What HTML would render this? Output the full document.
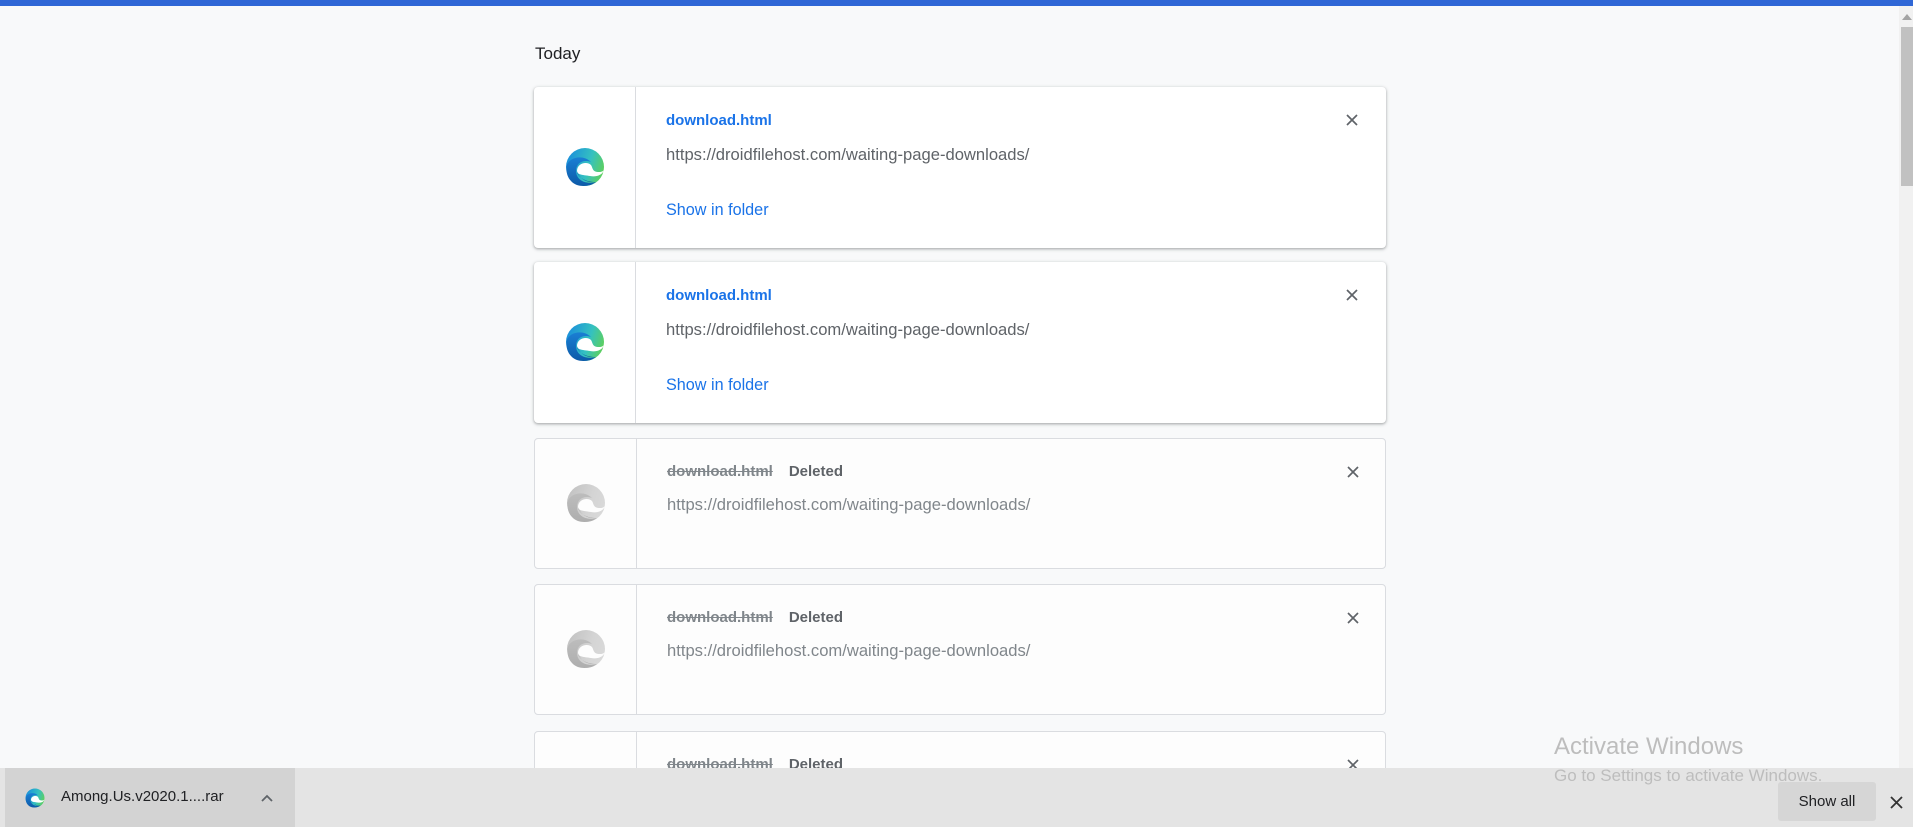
<!DOCTYPE html>
<html><head><meta charset="utf-8"><style>
*{margin:0;padding:0;box-sizing:border-box}
html{width:1913px;height:827px;overflow:hidden}
body{width:1913px;height:827px;overflow:hidden;background:#f8f9fa;font-family:"Liberation Sans",Arial,sans-serif;position:relative}
.topbar{position:absolute;left:0;top:0;width:1913px;height:6px;background:#2f67d6}
.sb{position:absolute;left:1899px;top:6px;width:14px;height:762px;background:#f1f1f1}
.thumb{position:absolute;left:1901px;top:27px;width:12px;height:159px;background:#c1c1c1}
.today{position:absolute;left:535px;top:44px;font-size:17px;color:#202124}
.card{position:absolute;left:534px;width:852px;background:#fff;border-radius:4px;box-shadow:0 1px 2px rgba(60,64,67,.3),0 1px 3px 1px rgba(60,64,67,.15)}
.card.del{background:#fdfdfd;box-shadow:none;border:1px solid #dadce0}
.div{position:absolute;left:101px;top:0;bottom:0;width:1px;background:#dadce0}
.icon{position:absolute;left:31px;top:60px;width:40px;height:40px}
.t{position:absolute;left:132px;font-size:15px;font-weight:bold;color:#1a73e8;white-space:nowrap}
.u{position:absolute;left:132px;font-size:16.6px;color:#5f6368;white-space:nowrap}
.s{position:absolute;left:132px;font-size:16.2px;color:#1a73e8}
.x{position:absolute;left:811px;width:14px;height:14px}
.del .t{color:#80868b;text-decoration:line-through;font-weight:bold}
.del .t b{color:#5f6368;text-decoration:none;display:inline-block;margin-left:16px}
.del .u{color:#80868b}
.del .icon{filter:grayscale(1);opacity:.45}
.shelf{position:absolute;left:0;top:768px;width:1913px;height:59px;background:#e4e4e4;z-index:5}
.item{position:absolute;left:5px;top:0;width:290px;height:59px;background:#d3d3d3}
.aw1{position:absolute;left:1554px;top:733px;font-size:24px;color:#bdbdbd;z-index:6}
.aw2{position:absolute;left:1554px;top:766px;font-size:17px;color:#bdbdbd;z-index:6}
.btn{position:absolute;left:1778px;top:14px;width:98px;height:39px;background:#d6d6d6;border-radius:3px;font-size:15px;color:#202124;text-align:center;line-height:39px}
</style></head><body>
<svg width="0" height="0" style="position:absolute"><defs>
<linearGradient id="g" x1="0" y1="0.3" x2="1" y2="0.6"><stop offset="0" stop-color="#1a8fdc"/><stop offset=".6" stop-color="#35c1c0"/><stop offset="1" stop-color="#5fd05a"/></linearGradient>
<linearGradient id="g2" x1="0" y1="0" x2="0" y2="1"><stop offset="0" stop-color="#1a7fd4"/><stop offset="1" stop-color="#0d5aa8"/></linearGradient>
<symbol id="edge" viewBox="0 0 40 40">
<circle cx="20" cy="20" r="19" fill="url(#g)"/>
<path d="M1.5 19 C4 10 18 7 26 15 C18 12 11 16 11 24 C11 32 19 38 31 35 C25 40 12 41 6 34 C2 30 1 24 1.5 19Z" fill="url(#g2)"/>
<path d="M12 24 C12 16 22 14 26 18 C28 21 27 25 34 25 C37 25 38 24 39 23 C37 29 30 30 25 29 C19 28 12 28 12 24Z" fill="#fff"/>
<path d="M12 24 C13 31 21 35 31 35 C23 36 15 33 12 24Z" fill="#0b4f9c"/>
</symbol>
<symbol id="xx" viewBox="0 0 14 14"><path d="M2 2L12 12M12 2L2 12" stroke="#5f6368" stroke-width="1.7"/></symbol>
</defs></svg>
<div class="topbar"></div>
<div class="sb"></div><div class="thumb"></div>
<svg style="position:absolute;left:1902px;top:14px" width="10" height="6"><path d="M0 6L5 0L10 6Z" fill="#a3a3a3"/></svg>
<div class="today">Today</div>

<div class="card" style="top:87px;height:161px"><div class="div"></div>
<svg class="icon"><use href="#edge"/></svg>
<div class="t" style="top:25px">download.html</div>
<div class="u" style="top:58px">https://droidfilehost.com/waiting-page-downloads/</div>
<div class="s" style="top:114px">Show in folder</div>
<svg class="x" style="top:26px"><use href="#xx"/></svg></div>

<div class="card" style="top:262px;height:161px"><div class="div"></div>
<svg class="icon"><use href="#edge"/></svg>
<div class="t" style="top:25px">download.html</div>
<div class="u" style="top:58px">https://droidfilehost.com/waiting-page-downloads/</div>
<div class="s" style="top:114px">Show in folder</div>
<svg class="x" style="top:26px"><use href="#xx"/></svg></div>

<div class="card del" style="top:438px;height:131px"><div class="div"></div>
<svg class="icon" style="top:44px"><use href="#edge"/></svg>
<div class="t" style="top:24px">download.html<b>Deleted</b></div>
<div class="u" style="top:56px">https://droidfilehost.com/waiting-page-downloads/</div>
<svg class="x" style="top:26px"><use href="#xx"/></svg></div>

<div class="card del" style="top:584px;height:131px"><div class="div"></div>
<svg class="icon" style="top:44px"><use href="#edge"/></svg>
<div class="t" style="top:24px">download.html<b>Deleted</b></div>
<div class="u" style="top:56px">https://droidfilehost.com/waiting-page-downloads/</div>
<svg class="x" style="top:26px"><use href="#xx"/></svg></div>

<div class="card del" style="top:731px;height:90px"><div class="div"></div>
<div class="t" style="top:24px">download.html<b>Deleted</b></div>
<svg class="x" style="top:26px"><use href="#xx"/></svg></div>

<div class="aw1">Activate Windows</div>
<div class="shelf">
<div class="item">
<svg style="position:absolute;left:20px;top:20px" width="20" height="20"><use href="#edge"/></svg>
<div style="position:absolute;left:56px;top:20px;font-size:15px;color:#202124">Among.Us.v2020.1....rar</div>
<svg style="position:absolute;left:256px;top:26px" width="12" height="8"><path d="M1 7L6 2L11 7" stroke="#5f6368" stroke-width="1.8" fill="none"/></svg>
</div>
<div class="btn">Show all</div>
<svg style="position:absolute;left:1890px;top:28px" width="13" height="13"><path d="M1 1L12 12M12 1L1 12" stroke="#333" stroke-width="1.8"/></svg>
</div>
<div class="aw2">Go to Settings to activate Windows.</div>
</body></html>
